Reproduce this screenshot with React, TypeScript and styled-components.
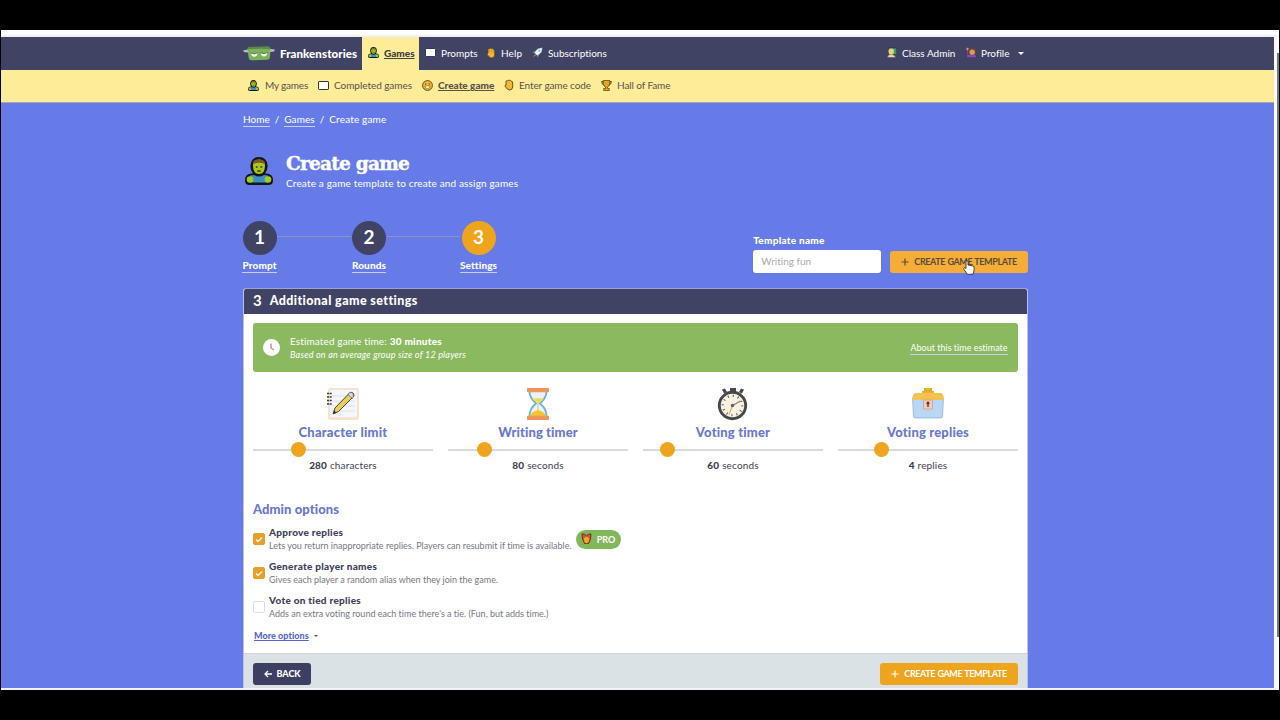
import React from "react";
import styled, { createGlobalStyle, css } from "styled-components";

const Global = createGlobalStyle`
  * { box-sizing: border-box; }
  body { margin: 0; background: #000; font-family: Lato, "Liberation Sans", sans-serif; font-variant-ligatures: none; }
  a { color: inherit; text-decoration: none; }
  p, h1, h2, h3 { margin: 0; }
`;

type TextProps = { $size?: number; $ls?: number; $ws?: number; $weight?: number; $color?: string };
const Text = styled.span<TextProps>`
  display: block;
  white-space: nowrap;
  font-size: ${(p) => p.$size ?? 10}px;
  letter-spacing: ${(p) => p.$ls ?? 0}px;
  word-spacing: ${(p) => p.$ws ?? 0}px;
  font-weight: ${(p) => p.$weight ?? 400};
  color: ${(p) => p.$color ?? "inherit"};
`;

const Screen = styled.div`
  width: 1280px;
  height: 720px;
  padding: 30px 1px;
  background: #000;
  overflow: hidden;
`;
const Browser = styled.div`
  height: 660px;
  display: grid;
  grid-template: 7px 651px 2px / 1fr 5px;
  background: #f3f3fa;
`;
const TopStrip = styled.div`
  grid-column: 1 / 3;
  background: linear-gradient(#fff 0 50%, #ececf3);
`;
const Page = styled.div`
  background: #667be8;
  overflow: hidden;
`;
const Scrollbar = styled.div`
  background: #fbfbfb;
  padding: 16px 0 0 3px;
`;
const Thumb = styled.div`
  height: 584px;
  background: #77797c;
`;

const Bar = styled.div<{ $yellow?: boolean }>`
  height: 33px;
  padding-left: 241px;
  display: flex;
  align-items: center;
  background: ${(p) => (p.$yellow ? "#feec99" : "#404364")};
  color: ${(p) => (p.$yellow ? "#57524c" : "#fff")};
  ${(p) => p.$yellow && css`padding-left: 247px; border-bottom: 1px solid #a9a8ad;`}
`;
const Brand = styled.div`
  width: 120px;
  height: 33px;
  display: flex;
  align-items: center;
  gap: 5px;
  padding-left: 1px;
`;
const NavItem = styled.a<{ $w: number; $active?: boolean; $gap?: number; $up?: boolean }>`
  width: ${(p) => p.$w}px;
  height: 33px;
  flex: none;
  display: flex;
  align-items: center;
  gap: ${(p) => p.$gap ?? 5}px;
  padding-bottom: ${(p) => (p.$up ? 2 : 0)}px;
  ${(p) => p.$active && css`
    background: #feec99;
    color: #404040;
    padding-left: 6px;
  `}
`;
const Spacer = styled.div<{ $w?: number }>`
  ${(p) => (p.$w ? css`width: ${p.$w}px; flex: none;` : css`flex: 1;`)}
`;
const Under = styled(Text)`
  text-decoration: underline;
  text-underline-offset: 1px;
`;
const Caret = styled.i<{ $color?: string; $s?: number }>`
  border: ${(p) => p.$s ?? 3}px solid transparent;
  border-top-color: ${(p) => p.$color ?? "#fff"};
  border-bottom: 0;
`;

const Content = styled.main`
  width: 785px;
  margin-left: 242px;
  color: #fff;
`;
const Crumbs = styled.nav`
  display: flex;
  gap: 5px;
  padding-top: 10px;
  height: 42px;
`;
const Lined = styled(Text)`
  height: 14px;
  line-height: 13px;
  border-bottom: 1px solid #c9cff0;
`;
const Crumb = styled(Text)`
  line-height: 13px;
`;
const Title = styled.header`
  display: flex;
  gap: 13px;
  height: 76px;
  padding: 7px 0 0 2px;
`;
const H1 = styled.h1`
  height: 25px;
  font: 700 18.5px/23px "DejaVu Serif", serif;
  letter-spacing: -0.75px;
  -webkit-text-stroke: 0.4px #fff;
  white-space: nowrap;
`;
const TitleIcon = styled.div`
  padding-top: 5px;
`;
const StepsRow = styled.section`
  display: flex;
  height: 67px;
`;
const Steps = styled.div`
  width: 513px;
  margin-left: -2px;
  display: flex;
`;
const Step = styled.div`
  width: 37px;
  flex: none;
  display: flex;
  flex-direction: column;
  align-items: center;
  gap: 4px;
  margin-right: -1px;
`;
const Circle = styled.div<{ $on?: boolean }>`
  width: 34px;
  height: 34px;
  border-radius: 50%;
  flex: none;
  display: grid;
  place-items: center;
  padding-bottom: 2px;
  font: 700 19px/32px Lato, sans-serif;
  background: ${(p) => (p.$on ? "#eea41c" : "#404364")};
`;
const Connector = styled.div`
  width: 73.5px;
  height: 1px;
  margin-top: 15px;
  background: #8f93c0;
`;
const Field = styled.label`
  width: 128px;
  margin-right: 9px;
  padding-top: 13px;
`;
const Input = styled.div`
  height: 23px;
  margin-top: 4px;
  padding: 0 0 2px 8px;
  display: flex;
  align-items: center;
  border-radius: 3px;
  background: #fff;
`;
const Button = styled.button<{ $w: number; $kind?: "hover" | "dark" }>`
  width: ${(p) => p.$w}px;
  height: 22px;
  padding: 0 0 1px;
  border: 0;
  border-radius: 3px;
  display: flex;
  align-items: center;
  justify-content: center;
  gap: 5px;
  font-family: Lato, sans-serif;
  color: ${(p) => (p.$kind === "hover" ? "#5c4a3c" : "#fff")};
  background: ${(p) => (p.$kind === "dark" ? "#3d3f62" : p.$kind === "hover" ? "#f4ae38" : "#eea41c")};
`;
const TopButton = styled.div`
  position: relative;
  padding-top: 30px;
`;
const Cursor = styled.svg`
  position: absolute;
  left: 73px;
  top: 39px;
`;

const Card = styled.section`
  height: 421px;
  border: 1px solid #b9c1ea;
  border-top-color: #9ca3cf;
  border-radius: 3px;
  background: #fff;
  color: #404057;
  display: flex;
  flex-direction: column;
  overflow: hidden;
`;
const CardHead = styled.div`
  height: 25px;
  flex: none;
  padding: 0 0 3px 9px;
  display: flex;
  align-items: center;
  gap: 8px;
  color: #fff;
  background: #404364;
`;
const Banner = styled.div`
  height: 49px;
  flex: none;
  margin: 9px 9px 0;
  padding: 0 10.5px 0 10px;
  display: flex;
  align-items: center;
  border-radius: 3px;
  color: #fff;
  background: #8ab95f;
`;
const BannerText = styled.div`
  margin-left: 10px;
  display: grid;
  gap: 0;
`;
const Line = styled.div`
  display: flex;
  gap: 3px;
  line-height: 13px;
`;
const Sliders = styled.div`
  height: 125px;
  flex: none;
  display: grid;
  grid-template-columns: repeat(4, 180px);
  column-gap: 15px;
  padding: 15px 9px 0;
`;
const SliderCell = styled.div`
  display: flex;
  flex-direction: column;
  align-items: center;
  color: #3e3e50;
`;
const SliderTitle = styled.h3`
  height: 18px;
  margin-top: 2px;
  color: #6a77cf;
  line-height: 18px;
`;
const Track = styled.div`
  width: 180px;
  height: 15px;
  margin: 1px 0 2px;
  display: flex;
  align-items: center;
  background: linear-gradient(#d9dadd, #d9dadd) center / 100% 2px no-repeat;
`;
const Knob = styled.div<{ $x: number }>`
  width: 15px;
  height: 15px;
  margin-left: ${(p) => p.$x}px;
  border-radius: 50%;
  background: #eea41c;
`;
const Admin = styled.div`
  flex: 1;
  padding: 0 9px;
`;
const AdminTitle = styled.h2`
  height: 25px;
  padding-top: 5px;
  line-height: 15px;
  color: #6a77cf;
`;
const Option = styled.div`
  height: 34px;
  display: flex;
  align-items: center;
  gap: 4px;
`;
const OptionText = styled.div`
  height: 32px;
  padding-top: 2px;
  line-height: 14px;
`;
const Check = styled.div<{ $on?: boolean }>`
  width: 12px;
  height: 12px;
  border-radius: 2px;
  display: grid;
  place-items: center;
  border: 1px solid ${(p) => (p.$on ? "#e5a02b" : "#dcdce6")};
  background: ${(p) => (p.$on ? "#e5a02b" : "#fff")};
`;
const Pro = styled.div`
  width: 45px;
  height: 19px;
  border-radius: 10px;
  display: flex;
  align-items: center;
  justify-content: center;
  gap: 5px;
  color: #fff;
  background: #82b65a;
`;
const More = styled.div`
  display: flex;
  align-items: center;
  gap: 5px;
  margin: 6px 0 0 1px;
  color: #5766cf;
`;
const Footer = styled.footer`
  height: 55px;
  flex: none;
  padding: 9px 9px;
  display: flex;
  justify-content: space-between;
  background: #dbe2e5;
  border-top: 1px solid #cfd4d8;
`;

const Person = ({ s = 11 }: { s?: number }) => (
  <svg width={s} height={s} viewBox="0 0 28 28">
    <path d="M0 23.500Q0 17 6 16.500h2Q5 13 5.500 8 6.500 0 14 0t8.500 8q.5 5-2.500 8.500h2q6 .5 6 7 0 4.500-4.500 4.500h-19Q0 28 0 23.500z" fill="#12161c" />
    <path d="M8 8.500q0-6 6-6t6 6q0 8.500-6 8.500T8 8.500z" fill="#a9c71c" />
    <path d="M7.800 7q0-4.500 6.200-4.500T20.200 7Q17 5.800 14 5.800T7.800 7z" fill="#7c5a26" />
    <path d="M5 18.500 9 18q5 3 10 0l4 .5v7H5z" fill="#3f8fc5" />
    <circle cx="5" cy="22.500" r="3.300" fill="#a4cc1c" /><circle cx="23" cy="22.500" r="3.300" fill="#a4cc1c" />
    <path d="M10.800 10h1.800m2.800 0h1.800M12.300 14h3.400" stroke="#33420c" strokeWidth="1.300" />
  </svg>
);
const Book = ({ outline }: { outline?: boolean }) => (
  <svg width="11" height="9" viewBox="0 0 11 9">
    <rect x=".5" y=".5" width="10" height="8" rx=".6" fill={outline ? "#fffdf2" : "#fff"} stroke={outline ? "#333" : "#33395a"} />
    {!outline && <path d="M5.500 1v7" stroke="#dfe8f2" strokeWidth=".5" />}
  </svg>
);
const Hand = ({ dark }: { dark?: boolean }) => (
  <svg width="10" height="12" viewBox="0 0 10 12">
    <path d="M2 6V2.200Q2.600 1.200 3.500 2 4.300.4 5.400 1.400 6.600.8 7.100 2.200 8.700 2 8.700 4v4Q8.500 11 5.500 11 3.400 11 1 7.200 1 5.700 2 6.300z" fill="#f5b638" stroke={dark ? "#4a3410" : "#51402c"} strokeWidth=".8" />
    {!dark && <path d="M3.700 2.500v3M5.400 2v3.500M7 2.800v3" stroke="#a96d18" strokeWidth=".4" />}
  </svg>
);
const Rocket = () => (
  <svg width="11" height="11" viewBox="0 0 11 11">
    <path d="M2 5.500 6 1.500 10.500.5 9.700 5 5.500 9z" fill="#eef5f8" stroke="#2a2e40" strokeWidth=".3" />
    <path d="m3.500 3.500-3 2.200 2.300.8zM7.500 7.500l-2 3-.8-2.200z" fill="#45a78f" /><path d="M3 7 .8 10.200l3.400-1.800z" fill="#e3574a" />
    <circle cx="7.300" cy="3.700" r="1" fill="#62b4d8" />
  </svg>
);
const Smile = () => (
  <svg width="11" height="11" viewBox="0 0 11 11">
    <circle cx="5.500" cy="5.500" r="4.900" fill="#f5bd2b" stroke="#4b4024" strokeWidth=".9" />
    <path d="M2.800 6h5.400q-.4 2.500-2.700 2.500T2.800 6z" fill="#fff" stroke="#59431a" strokeWidth=".5" /><path d="M3 4h1.300m2.400 0H8" stroke="#3e3017" strokeWidth=".9" />
  </svg>
);
const Trophy = () => (
  <svg width="11" height="11" viewBox="0 0 11 11">
    <path d="M2.500 1.500H.7q0 3 2.500 3.500M8.500 1.500h1.800q0 3-2.500 3.500" fill="none" stroke="#59421a" />
    <path d="M2.300.5h6.400v3.700q-.6 2.400-2.200 2.700V8.500h1.800v2H2.700v-2h1.800V6.900Q2.900 6.600 2.300 4.200z" fill="#e7a421" stroke="#4f3a12" strokeWidth=".7" />
  </svg>
);
const Teacher = () => (
  <svg width="10" height="11" viewBox="0 0 10 11">
    <rect x="1.500" y="1" width="8.300" height="6.700" fill="#3c9961" stroke="#252a33" strokeWidth=".5" />
    <path d="M.4 10.600Q.6 7.300 4 7.300t4.800 3.300z" fill="#e6d9b0" stroke="#252a33" strokeWidth=".4" /><circle cx="4.200" cy="5" r="2.600" fill="#f2c988" /><path d="M1.500 4.800q-.2-3.300 2.800-3.300t2.700 2.800z" fill="#e9d07c" />
  </svg>
);
const Raise = () => (
  <svg width="11" height="11" viewBox="0 0 11 11">
    <path d="M.8 10.700V2.500h1.600v5L9 7.300q1.500.6 1.500 3.400z" fill="#8d4bb0" stroke="#272436" strokeWidth=".4" /><circle cx="6.200" cy="4.400" r="3.900" fill="#6d4130" /><circle cx="6.200" cy="5.200" r="2.700" fill="#d79a62" /><path d="M.5.800h2v2.400h-2z" fill="#d79a62" />
  </svg>
);
const Logo = () => (
  <svg width="32" height="15" viewBox="0 0 32 15">
    <path d="M0 4.500 5 3.500v3L1 6zM32 3.500 27 3v3l4-.6z" fill="#b9bfc4" />
    <path d="M4.500 2.500Q5 1 7 1l18-.3q2 0 2.500 1.800L27 11q-.2 2.500-2.500 2.700l-16 .6Q6 14.300 5.700 12z" fill="#7cb35a" />
    <path d="M5 2Q5.500.8 7 .8l18-.3q1.500 0 2.200 1.300l.2 1.400q-11-1-22.600.3z" fill="#5a8a47" />
    <path d="M8 7q3.300 2 6.500-.2 0 4-3.200 4T8 7zM17.800 6.800q3.200 2 6.400-.2 0 4-3.200 4t-3.200-3.800z" fill="#f2f8ea" />
    <path d="M7.500 6.800q3.700 2.300 7.500-.2M17.300 6.600q3.700 2.300 7.400-.2" fill="none" stroke="#4d7d3c" strokeWidth=".9" />
  </svg>
);
const Clock = () => (
  <svg width="17" height="18" viewBox="0 0 17 18">
    <ellipse cx="8.500" cy="8.500" rx="8.500" ry="8.500" fill="#fff" /><path d="M8 4.500V9l3 2" fill="none" stroke="#a09d9f" strokeWidth="1.400" />
  </svg>
);
const Plus = () => <svg width="8" height="8" viewBox="0 0 8 8"><path d="M4 .5v7M.5 4h7" stroke="currentColor" strokeWidth="1.200" /></svg>;
const ArrowLeft = () => <svg width="8" height="8" viewBox="0 0 8 8"><path d="M8 4H1M4 1 1 4l3 3" fill="none" stroke="currentColor" strokeWidth="1.300" /></svg>;
const Tick = () => <svg width="8" height="7" viewBox="0 0 8 7"><path d="m1 3.500 2 2L7 1.500" fill="none" stroke="#fff6dc" strokeWidth="1.400" /></svg>;
const Medal = () => (
  <svg width="11" height="12" viewBox="0 0 11 12">
    <path d="M1 1h2.500l2 2.200L7.500 1H10L9.500 6l-2 4.500h-4L1.500 6z" fill="#d4542c" stroke="#4a2c18" strokeWidth=".8" /><path d="M5.500 3.500 8.300 5.500 7.500 9l-2 1.500-2-1.500-.8-3.500z" fill="#f2a72a" />
  </svg>
);

const Notepad = () => (
  <svg width="34" height="34" viewBox="0 0 34 34">
    <rect x="2" y="1" width="31" height="32" rx="2.500" fill="#f7e3cd" /><rect x="4" y="3" width="27" height="27" rx="1" fill="#f5f6fb" />
    <path d="M5 9h24M5 14h24M5 19h24M5 24h24" stroke="#dde1ee" />
    <path d="M1 6.500h5M1 10h5M1 13.500h5M1 17h5" stroke="#35353a" strokeWidth="1.700" strokeDasharray="2 .7" />
    <path d="m7 27 2-6L23.500 6q2.500-1.500 4 .5 1.300 2-.5 3.500L12.500 24.500z" fill="#e9d05c" stroke="#4a4632" />
    <path d="m22 7.500 4.500 4L27.500 9l-.5-3-3-.8z" fill="#d9dcdf" stroke="#55585c" strokeWidth=".7" /><path d="m7 27 1.200-3.500 2.300 2.200z" fill="#333" />
  </svg>
);
const Hourglass = () => (
  <svg width="34" height="34" viewBox="0 0 34 34">
    <path d="M8.500 4Q8 10 15 16.500 8 22 8.500 30h17Q26 22 19 16.500 26 10 25.500 4z" fill="#e8f4fa" stroke="#6cb2dc" strokeWidth="1.800" />
    <path d="M11.500 12q5.500-2 11 0-1.500 2.500-5.500 4.500Q13 14.500 11.500 12z" fill="#eedc58" /><path d="M16.500 16h1v8h-1z" fill="#f1c22d" /><path d="M9.500 29q0-4 7.500-6 7.500 2 7.500 6z" fill="#f7c32e" />
    <rect x="6" y="1" width="22" height="4.300" rx="1" fill="#ee955a" /><rect x="6" y="28.700" width="22" height="4.300" rx="1" fill="#ee955a" />
  </svg>
);
const Stopwatch = () => (
  <svg width="34" height="34" viewBox="0 0 34 34">
    <path d="M14 1h6v4h-6zM6 2.500l3-1 2 3.500-3 1.500zM28 2.500l-3-1L23 5l3 1.500z" fill="#46484c" />
    <circle cx="16.500" cy="18.500" r="13.200" fill="#f9f2e3" stroke="#46484c" strokeWidth="2.900" />
    <circle cx="16.500" cy="18.500" r="9.700" fill="none" stroke="#55534f" strokeWidth="2.300" strokeDasharray="1 4.080" />
    <path d="m16.500 18.500 8-4.500" stroke="#857d71" strokeWidth="1.100" /><path d="m16.500 18.500-3.500 9" stroke="#d9a047" /><circle cx="16.500" cy="18.500" r="1.700" fill="#635d54" />
  </svg>
);
const BallotBox = () => (
  <svg width="34" height="34" viewBox="0 0 34 34">
    <path d="M13 1h8v3h2v4H11V4h2z" fill="#e9b02b" /><path d="M1.500 11h31l-1 18.500q0 1.500-2 1.500h-25q-2 0-2-1.500z" fill="#b8d7f8" stroke="#8fa9c4" strokeWidth=".7" />
    <path d="M2.500 7.500Q2.500 6 4.500 6h25q2 0 2.500 1.500l1 3.500q0 2-2 2H3q-2 0-2-2z" fill="#f2c353" /><path d="M12.500 13h9v9h-9z" fill="#f1cdb6" stroke="#cf9c7d" strokeWidth=".7" />
    <circle cx="17" cy="16" r="1.600" fill="#6b3526" /><path d="M16.300 16h1.400v4h-1.400z" fill="#6b3526" />
  </svg>
);

const sliders = [
  { icon: <Notepad />, title: "Character limit", ls: 0.2, x: 37.5, n: "280", unit: "characters" },
  { icon: <Hourglass />, title: "Writing timer", ls: 0.1, x: 29, n: "80", unit: "seconds" },
  { icon: <Stopwatch />, title: "Voting timer", ls: 0.17, x: 17, n: "60", unit: "seconds" },
  { icon: <BallotBox />, title: "Voting replies", ls: 0.17, x: 36, n: "4", unit: "replies" },
];
const options = [
  { on: true, pro: true, title: "Approve replies", text: "Lets you return inappropriate replies. Players can resubmit if time is available." },
  { on: true, title: "Generate player names", text: "Gives each player a random alias when they join the game." },
  { title: "Vote on tied replies", text: "Adds an extra voting round each time there's a tie. (Fun, but adds time.)" },
];
const steps = ["Prompt", "Rounds", "Settings"];

export default function App() {
  return (
    <Screen>
      <Global />
      <Browser>
        <TopStrip />
        <Page>
          <Bar>
            <Brand><Logo /><Text $size={11.5} $weight={900} $ls={0.08}>Frankenstories</Text></Brand>
            <NavItem $w={57} $active $up><Person /><Under $weight={900}>Games</Under></NavItem>
            <Spacer $w={6} />
            <NavItem $w={61} $up><Book /><Text>Prompts</Text></NavItem>
            <NavItem $w={46} $up><Hand /><Text $ls={0.1}>Help</Text></NavItem>
            <NavItem $w={90} $up><Rocket /><Text>Subscriptions</Text></NavItem>
            <Spacer />
            <NavItem $w={79} $up><Teacher /><Text>Class Admin</Text></NavItem>
            <NavItem $w={52} $up $gap={4}><Raise /><Text>Profile</Text></NavItem>
            <Caret />
            <Spacer $w={250} />
          </Bar>
          <Bar $yellow>
            <NavItem $w={70} $gap={6} $up><Person /><Text $ls={-0.2}>My games</Text></NavItem>
            <NavItem $w={104} $up><Book outline /><Text $ls={-0.05}>Completed games</Text></NavItem>
            <NavItem $w={82} $up><Smile /><Under $weight={900}>Create game</Under></NavItem>
            <NavItem $w={97} $up><Hand dark /><Text $ls={-0.1}>Enter game code</Text></NavItem>
            <NavItem $w={80} $up><Trophy /><Text $ls={-0.1}>Hall of Fame</Text></NavItem>
          </Bar>
          <Content>
            <Crumbs>
              <Lined>Home</Lined><Crumb>/</Crumb><Lined $ls={0.1}>Games</Lined><Crumb>/</Crumb><Crumb $ls={0.15}>Create game</Crumb>
            </Crumbs>
            <Title>
              <TitleIcon><Person s={28} /></TitleIcon>
              <div><H1>Create game</H1><Text $ls={0.16}>Create a game template to create and assign games</Text></div>
            </Title>
            <StepsRow>
              <Steps>
                {steps.map((s, i) => (
                  <React.Fragment key={s}>
                    {i > 0 && <Connector />}
                    <Step><Circle $on={i === 2}>{i + 1}</Circle><Lined $weight={900} $ls={0.1}>{s}</Lined></Step>
                  </React.Fragment>
                ))}
              </Steps>
              <Field><Text $weight={900} $ls={0.27}>Template name</Text><Input><Text $color="#aaa9ad">Writing fun</Text></Input></Field>
              <TopButton>
                <Button $w={138} $kind="hover"><Plus /><Text $size={9} $weight={700} $ls={-0.4} $ws={0.6}>CREATE GAME TEMPLATE</Text></Button>
                <Cursor width="12" height="15" viewBox="0 0 12 15">
                  <path d="M3 8.500V1.800Q3 .7 4 .7t1 1.100V5l5 1q1.300.4 1.200 2l-.4 4-1 2.300H4.500L1 9.500Q.3 8 1.500 7.700z" fill="#fff" stroke="#222" strokeWidth=".8" />
                </Cursor>
              </TopButton>
            </StepsRow>
            <Card>
              <CardHead><Text $size={15} $weight={700}>3</Text><Text $size={12.5} $weight={900} $ls={0.4}>Additional game settings</Text></CardHead>
              <Banner>
                <Clock />
                <BannerText>
                  <Line><Text $ls={0.12}>Estimated game time:</Text><Text $weight={900} $ls={0.23}>30 minutes</Text></Line>
                  <Line><Text as="em" $size={9} $ls={0.21}>Based on an average group size of 12 players</Text></Line>
                </BannerText>
                <Spacer />
                <Lined $size={9}>About this time estimate</Lined>
              </Banner>
              <Sliders>
                {sliders.map((s) => (
                  <SliderCell key={s.title}>
                    {s.icon}
                    <SliderTitle><Text $size={13} $weight={900} $ls={s.ls}>{s.title}</Text></SliderTitle>
                    <Track><Knob $x={s.x} /></Track>
                    <Line><Text $weight={900} $ls={0.1}>{s.n}</Text><Text $ls={0.15}>{s.unit}</Text></Line>
                  </SliderCell>
                ))}
              </Sliders>
              <Admin>
                <AdminTitle><Text $size={13} $weight={900} $ls={0.08}>Admin options</Text></AdminTitle>
                {options.map((o) => (
                  <Option key={o.title}>
                    <Check $on={o.on}>{o.on && <Tick />}</Check>
                    <OptionText><Text $weight={900} $ls={0.27}>{o.title}</Text><Text $size={9} $color="#77777f">{o.text}</Text></OptionText>
                    {o.pro && <Pro><Medal /><Text $size={9} $weight={700}>PRO</Text></Pro>}
                  </Option>
                ))}
                <More><Under $size={9} $weight={900} $ls={0.05}>More options</Under><Caret $s={2} $color="#555" /></More>
              </Admin>
              <Footer>
                <Button $w={58} $kind="dark"><ArrowLeft /><Text $size={9} $weight={900} $ls={-0.1}>BACK</Text></Button>
                <Button $w={138}><Plus /><Text $size={9} $weight={700} $ls={-0.4} $ws={0.6}>CREATE GAME TEMPLATE</Text></Button>
              </Footer>
            </Card>
          </Content>
        </Page>
        <Scrollbar><Thumb /></Scrollbar>
      </Browser>
    </Screen>
  );
}
